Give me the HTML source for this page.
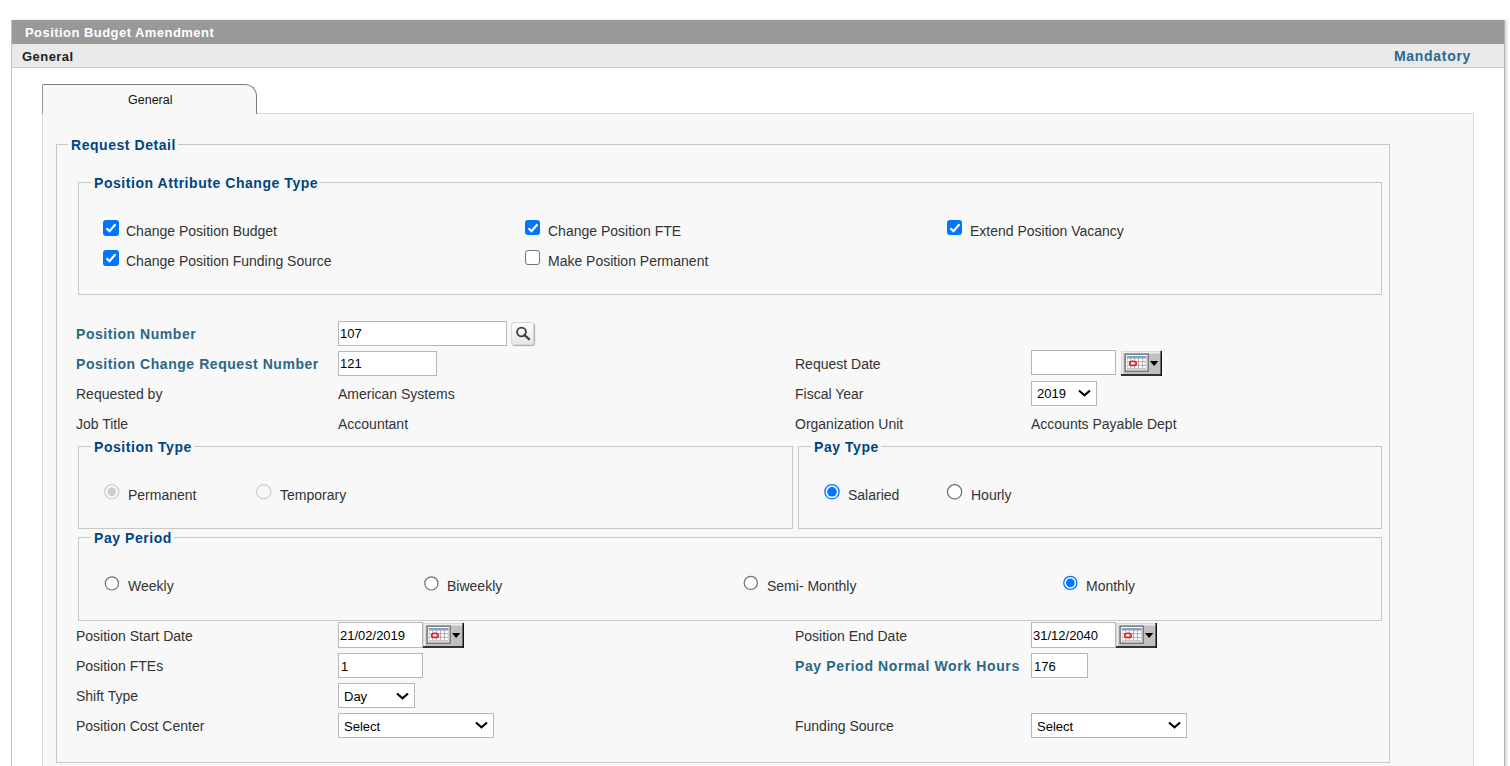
<!DOCTYPE html>
<html><head><meta charset="utf-8">
<style>
*{box-sizing:border-box;margin:0;padding:0}
html,body{width:1510px;height:766px;overflow:hidden;background:#fff;font-family:"Liberation Sans",sans-serif;color:#333}
.a{position:absolute}
.t{position:absolute;white-space:nowrap;font-size:14px;line-height:16px;color:#333}
.b{font-weight:bold;letter-spacing:0.55px}
.lg{color:#004580;font-weight:bold;letter-spacing:0.55px;background:#f8f8f8;padding:0 2px 0 3px}
.mand{color:#2a6886;font-weight:bold;letter-spacing:0.55px}
.fs{position:absolute;border:1px solid #c8c8c8}
.inp{position:absolute;background:#fff;border:1px solid #b4b8b8;height:25px}
.it{position:absolute;white-space:nowrap;font-size:13px;line-height:16px;color:#000}
.cb{position:absolute;width:16px;height:16px;border-radius:3px;background:#0075ff}
.cbu{position:absolute;width:16px;height:16px;border-radius:3px;background:#fff;border:1px solid #767676}
.rd{position:absolute;width:16px;height:16px;border-radius:50%;background:#fff;border:1px solid #767676}
.rdc{position:absolute;width:16px;height:16px;border-radius:50%;background:#fff;border:2px solid #0075ff}
.rdc::after{content:"";position:absolute;left:2px;top:2px;width:8px;height:8px;border-radius:50%;background:#0075ff}
.rdd{position:absolute;width:16px;height:16px;border-radius:50%;background:#f0f0f0;border:1px solid #d0d0d0}
.rdd.on::after{content:"";position:absolute;left:3px;top:3px;width:8px;height:8px;border-radius:50%;background:#cfcfcf}
.sel{position:absolute;background:#fff;border:1px solid #b4b8b8;height:25px}
.chev{position:absolute;width:13px;height:9px}
.cal{position:absolute;width:41px;height:25px}
</style></head><body>
<!-- outer panel -->
<div class="a" style="left:11px;top:20px;width:1494px;height:760px;border-left:1px solid #c4c4c4;border-right:1px solid #b0b0b0;box-shadow:2px 0 2px rgba(0,0,0,0.15)"></div>
<div class="a" style="left:12px;top:20px;width:1492px;height:24px;background:#999"></div>
<div class="t b" style="left:25px;top:25px;font-size:13px;color:#fff;letter-spacing:0.45px">Position Budget Amendment</div>
<div class="a" style="left:12px;top:44px;width:1492px;height:24px;background:#e9e9e9;border-bottom:1px solid #c8c8c8"></div>
<div class="t b" style="left:22px;top:49px;font-size:13px;color:#222;letter-spacing:0.45px">General</div>
<div class="t b" style="left:1394px;top:48px;font-size:14px;color:#2a6a90;letter-spacing:0.7px">Mandatory</div>

<!-- content panel -->
<div class="a" style="left:42px;top:113px;width:1432px;height:700px;background:#f8f8f8;border:1px solid #dcdcdc"></div>
<!-- tab -->
<div class="a" style="left:42px;top:84px;width:215px;height:30px;background:#f8f8f8;border-top:1px solid #7c7c7c;border-left:1px solid #9a9a9a;border-right:1px solid #7c7c7c;border-top-right-radius:12px"></div>
<div class="t" style="left:128px;top:92px;font-size:12.5px;color:#111">General</div>

<!-- Request Detail -->
<div class="fs" style="left:56px;top:144px;width:1334px;height:619px"></div>
<div class="t lg" style="left:68px;top:137px">Request Detail</div>

<!-- PACT -->
<div class="fs" style="left:78px;top:182px;width:1304px;height:113px"></div>
<div class="t lg" style="left:91px;top:175px">Position Attribute Change Type</div>

<div class="cb" style="left:103px;top:220px"><svg width="16" height="16" viewBox="0 0 16 16"><path d="M3.5 8.2 L6.5 11.2 L12.5 4.2" fill="none" stroke="#fff" stroke-width="2.2"/></svg></div>
<div class="t" style="left:126px;top:223px">Change Position Budget</div>
<div class="cb" style="left:103px;top:250px"><svg width="16" height="16" viewBox="0 0 16 16"><path d="M3.5 8.2 L6.5 11.2 L12.5 4.2" fill="none" stroke="#fff" stroke-width="2.2"/></svg></div>
<div class="t" style="left:126px;top:253px">Change Position Funding Source</div>
<div class="cb" style="left:525px;top:220px;width:15px;height:15px"><svg width="16" height="16" viewBox="0 0 16 16"><path d="M3.5 8.2 L6.5 11.2 L12.5 4.2" fill="none" stroke="#fff" stroke-width="2.2"/></svg></div>
<div class="t" style="left:548px;top:223px">Change Position FTE</div>
<div class="cbu" style="left:525px;top:250px;width:15px;height:15px"></div>
<div class="t" style="left:548px;top:253px">Make Position Permanent</div>
<div class="cb" style="left:947px;top:220px;width:15px;height:15px"><svg width="16" height="16" viewBox="0 0 16 16"><path d="M3.5 8.2 L6.5 11.2 L12.5 4.2" fill="none" stroke="#fff" stroke-width="2.2"/></svg></div>
<div class="t" style="left:970px;top:223px">Extend Position Vacancy</div>

<!-- rows -->
<div class="t mand" style="left:76px;top:326px">Position Number</div>
<div class="inp" style="left:338px;top:321px;width:169px"></div>
<div class="it" style="left:340px;top:326px">107</div>
<div class="a" style="left:511px;top:322px;width:23px;height:23px;border-radius:3px;background:linear-gradient(#fff,#e6e6e6);border:1px solid #d8d8d8;box-shadow:1px 1px 1px #a8a8a8"><svg width="22" height="22" viewBox="0 0 22 22" style="position:absolute;left:-1px;top:-1px"><circle cx="10.5" cy="10" r="4.4" fill="none" stroke="#404040" stroke-width="1.9"/><path d="M13.4 13 L18 17.2" stroke="#404040" stroke-width="2.3" stroke-linecap="round"/></svg></div>

<div class="t mand" style="left:76px;top:356px">Position Change Request Number</div>
<div class="inp" style="left:338px;top:351px;width:99px"></div>
<div class="it" style="left:340px;top:356px">121</div>

<div class="t" style="left:795px;top:356px">Request Date</div>
<div class="inp" style="left:1031px;top:350px;width:85px"></div>
<div class="cal" style="left:1121px;top:351px"><svg width="41" height="25" viewBox="0 0 41 25" style="position:absolute;left:0;top:0"><rect x="0" y="0" width="41" height="25" fill="#c0c0c0"/><rect x="0" y="0" width="40" height="2.5" fill="#ececec"/><rect x="0" y="0" width="2.5" height="24" fill="#ececec"/><rect x="0" y="0" width="40" height="1" fill="#d8d8d8"/><rect x="0" y="0" width="1" height="24" fill="#d8d8d8"/><rect x="0" y="23" width="41" height="2" fill="#333"/><rect x="39.5" y="0" width="1.5" height="25" fill="#111"/><rect x="3.5" y="2.5" width="24.3" height="18.3" fill="#6a6a6a"/><rect x="4.8" y="3.8" width="21.7" height="15.7" fill="#fff"/><rect x="5.8" y="5" width="19.7" height="13.5" fill="#a8a8a8"/><rect x="5.8" y="5" width="19.7" height="2" fill="#7da5dc"/><g fill="#fff"><rect x="6.3" y="7.6" width="3" height="2.6"/><rect x="10.2" y="7.6" width="3" height="2.6"/><rect x="14.1" y="7.6" width="3" height="2.6"/><rect x="18" y="7.6" width="3" height="2.6"/><rect x="21.9" y="7.6" width="3" height="2.6"/><rect x="6.3" y="11.2" width="3" height="2.6"/><rect x="10.2" y="11.2" width="3" height="2.6"/><rect x="14.1" y="11.2" width="3" height="2.6"/><rect x="18" y="11.2" width="3" height="2.6"/><rect x="21.9" y="11.2" width="3" height="2.6"/><rect x="6.3" y="14.8" width="3" height="2.6"/><rect x="10.2" y="14.8" width="3" height="2.6"/><rect x="14.1" y="14.8" width="3" height="2.6"/><rect x="18" y="14.8" width="3" height="2.6"/><rect x="21.9" y="14.8" width="3" height="2.6"/></g><ellipse cx="12" cy="12.4" rx="3.4" ry="2.2" fill="none" stroke="#e8141e" stroke-width="1.5"/><path d="M29 10 L37.3 10 L33.15 15 Z" fill="#000"/></svg></div>

<div class="t" style="left:76px;top:386px">Requested by</div>
<div class="t" style="left:338px;top:386px">American Systems</div>
<div class="t" style="left:795px;top:386px">Fiscal Year</div>
<div class="sel" style="left:1031px;top:381px;width:66px"></div>
<div class="it" style="left:1037px;top:386px">2019</div>
<svg class="chev" style="left:1078px;top:389px" viewBox="0 0 13 9"><path d="M1 1.5 L6.5 6.3 L12 1.5" fill="none" stroke="#000" stroke-width="2.1"/></svg>

<div class="t" style="left:76px;top:416px">Job Title</div>
<div class="t" style="left:338px;top:416px">Accountant</div>
<div class="t" style="left:795px;top:416px">Organization Unit</div>
<div class="t" style="left:1031px;top:416px">Accounts Payable Dept</div>

<!-- Position Type -->
<div class="fs" style="left:78px;top:446px;width:715px;height:83px"></div>
<div class="t lg" style="left:91px;top:439px">Position Type</div>
<svg class="a" style="left:103px;top:483px" width="18" height="18"><circle cx="8.80" cy="8.80" r="7.20" fill="#f6f6f6" stroke="#cfcfcf" stroke-width="1.2"/><circle cx="8.80" cy="8.80" r="4.20" fill="#cdcdcd"/></svg>
<div class="t" style="left:128px;top:487px">Permanent</div>
<svg class="a" style="left:255px;top:482px" width="18" height="18"><circle cx="8.80" cy="9.70" r="7.15" fill="#f6f6f6" stroke="#cfcfcf" stroke-width="1.2"/></svg>
<div class="t" style="left:280px;top:487px">Temporary</div>

<!-- Pay Type -->
<div class="fs" style="left:798px;top:446px;width:584px;height:83px"></div>
<div class="t lg" style="left:811px;top:439px">Pay Type</div>
<svg class="a" style="left:823px;top:482px" width="18" height="18"><circle cx="9.00" cy="9.80" r="7.15" fill="#fff" stroke="#0075ff" stroke-width="1.3"/><circle cx="9.00" cy="9.80" r="4.80" fill="#0075ff"/></svg>
<div class="t" style="left:848px;top:487px">Salaried</div>
<svg class="a" style="left:945px;top:483px" width="18" height="18"><circle cx="9.60" cy="8.80" r="7.15" fill="#fff" stroke="#707070" stroke-width="1.2"/></svg>
<div class="t" style="left:971px;top:487px">Hourly</div>

<!-- Pay Period -->
<div class="fs" style="left:78px;top:537px;width:1304px;height:84px"></div>
<div class="t lg" style="left:91px;top:530px">Pay Period</div>
<svg class="a" style="left:103px;top:575px" width="17" height="17"><circle cx="8.90" cy="8.40" r="6.60" fill="#fff" stroke="#707070" stroke-width="1.2"/></svg>
<div class="t" style="left:128px;top:578px">Weekly</div>
<svg class="a" style="left:423px;top:575px" width="17" height="17"><circle cx="8.40" cy="8.40" r="6.60" fill="#fff" stroke="#707070" stroke-width="1.2"/></svg>
<div class="t" style="left:447px;top:578px">Biweekly</div>
<svg class="a" style="left:742px;top:574px" width="17" height="17"><circle cx="8.80" cy="8.90" r="6.60" fill="#fff" stroke="#707070" stroke-width="1.2"/></svg>
<div class="t" style="left:767px;top:578px">Semi- Monthly</div>
<svg class="a" style="left:1062px;top:574px" width="17" height="17"><circle cx="8.30" cy="8.90" r="6.55" fill="#fff" stroke="#0075ff" stroke-width="1.3"/><circle cx="8.30" cy="8.90" r="4.35" fill="#0075ff"/></svg>
<div class="t" style="left:1086px;top:578px">Monthly</div>

<!-- bottom rows -->
<div class="t" style="left:76px;top:628px">Position Start Date</div>
<div class="inp" style="left:338px;top:622px;width:85px;height:26px"></div>
<div class="it" style="left:340px;top:628px">21/02/2019</div>
<div class="cal" style="left:423px;top:623px"><svg width="41" height="25" viewBox="0 0 41 25" style="position:absolute;left:0;top:0"><rect x="0" y="0" width="41" height="25" fill="#c0c0c0"/><rect x="0" y="0" width="40" height="2.5" fill="#ececec"/><rect x="0" y="0" width="2.5" height="24" fill="#ececec"/><rect x="0" y="0" width="40" height="1" fill="#d8d8d8"/><rect x="0" y="0" width="1" height="24" fill="#d8d8d8"/><rect x="0" y="23" width="41" height="2" fill="#333"/><rect x="39.5" y="0" width="1.5" height="25" fill="#111"/><rect x="3.5" y="2.5" width="24.3" height="18.3" fill="#6a6a6a"/><rect x="4.8" y="3.8" width="21.7" height="15.7" fill="#fff"/><rect x="5.8" y="5" width="19.7" height="13.5" fill="#a8a8a8"/><rect x="5.8" y="5" width="19.7" height="2" fill="#7da5dc"/><g fill="#fff"><rect x="6.3" y="7.6" width="3" height="2.6"/><rect x="10.2" y="7.6" width="3" height="2.6"/><rect x="14.1" y="7.6" width="3" height="2.6"/><rect x="18" y="7.6" width="3" height="2.6"/><rect x="21.9" y="7.6" width="3" height="2.6"/><rect x="6.3" y="11.2" width="3" height="2.6"/><rect x="10.2" y="11.2" width="3" height="2.6"/><rect x="14.1" y="11.2" width="3" height="2.6"/><rect x="18" y="11.2" width="3" height="2.6"/><rect x="21.9" y="11.2" width="3" height="2.6"/><rect x="6.3" y="14.8" width="3" height="2.6"/><rect x="10.2" y="14.8" width="3" height="2.6"/><rect x="14.1" y="14.8" width="3" height="2.6"/><rect x="18" y="14.8" width="3" height="2.6"/><rect x="21.9" y="14.8" width="3" height="2.6"/></g><ellipse cx="12" cy="12.4" rx="3.4" ry="2.2" fill="none" stroke="#e8141e" stroke-width="1.5"/><path d="M29 10 L37.3 10 L33.15 15 Z" fill="#000"/></svg></div>
<div class="t" style="left:795px;top:628px">Position End Date</div>
<div class="inp" style="left:1031px;top:622px;width:85px;height:26px"></div>
<div class="it" style="left:1033px;top:628px">31/12/2040</div>
<div class="cal" style="left:1116px;top:623px"><svg width="41" height="25" viewBox="0 0 41 25" style="position:absolute;left:0;top:0"><rect x="0" y="0" width="41" height="25" fill="#c0c0c0"/><rect x="0" y="0" width="40" height="2.5" fill="#ececec"/><rect x="0" y="0" width="2.5" height="24" fill="#ececec"/><rect x="0" y="0" width="40" height="1" fill="#d8d8d8"/><rect x="0" y="0" width="1" height="24" fill="#d8d8d8"/><rect x="0" y="23" width="41" height="2" fill="#333"/><rect x="39.5" y="0" width="1.5" height="25" fill="#111"/><rect x="3.5" y="2.5" width="24.3" height="18.3" fill="#6a6a6a"/><rect x="4.8" y="3.8" width="21.7" height="15.7" fill="#fff"/><rect x="5.8" y="5" width="19.7" height="13.5" fill="#a8a8a8"/><rect x="5.8" y="5" width="19.7" height="2" fill="#7da5dc"/><g fill="#fff"><rect x="6.3" y="7.6" width="3" height="2.6"/><rect x="10.2" y="7.6" width="3" height="2.6"/><rect x="14.1" y="7.6" width="3" height="2.6"/><rect x="18" y="7.6" width="3" height="2.6"/><rect x="21.9" y="7.6" width="3" height="2.6"/><rect x="6.3" y="11.2" width="3" height="2.6"/><rect x="10.2" y="11.2" width="3" height="2.6"/><rect x="14.1" y="11.2" width="3" height="2.6"/><rect x="18" y="11.2" width="3" height="2.6"/><rect x="21.9" y="11.2" width="3" height="2.6"/><rect x="6.3" y="14.8" width="3" height="2.6"/><rect x="10.2" y="14.8" width="3" height="2.6"/><rect x="14.1" y="14.8" width="3" height="2.6"/><rect x="18" y="14.8" width="3" height="2.6"/><rect x="21.9" y="14.8" width="3" height="2.6"/></g><ellipse cx="12" cy="12.4" rx="3.4" ry="2.2" fill="none" stroke="#e8141e" stroke-width="1.5"/><path d="M29 10 L37.3 10 L33.15 15 Z" fill="#000"/></svg></div>

<div class="t" style="left:76px;top:658px">Position FTEs</div>
<div class="inp" style="left:338px;top:653px;width:85px"></div>
<div class="it" style="left:341px;top:659px">1</div>
<div class="t mand" style="left:795px;top:658px;letter-spacing:0.62px">Pay Period Normal Work Hours</div>
<div class="inp" style="left:1031px;top:653px;width:57px"></div>
<div class="it" style="left:1034px;top:659px">176</div>

<div class="t" style="left:76px;top:688px">Shift Type</div>
<div class="sel" style="left:338px;top:683px;width:77px"></div>
<div class="it" style="left:344px;top:689px">Day</div>
<svg class="chev" style="left:396px;top:692px" viewBox="0 0 13 9"><path d="M1 1.5 L6.5 6.3 L12 1.5" fill="none" stroke="#000" stroke-width="2.1"/></svg>

<div class="t" style="left:76px;top:718px">Position Cost Center</div>
<div class="sel" style="left:338px;top:713px;width:156px"></div>
<div class="it" style="left:344px;top:719px">Select</div>
<svg class="chev" style="left:475px;top:721px" viewBox="0 0 13 9"><path d="M1 1.5 L6.5 6.3 L12 1.5" fill="none" stroke="#000" stroke-width="2.1"/></svg>
<div class="t" style="left:795px;top:718px">Funding Source</div>
<div class="sel" style="left:1031px;top:713px;width:156px"></div>
<div class="it" style="left:1037px;top:719px">Select</div>
<svg class="chev" style="left:1168px;top:721px" viewBox="0 0 13 9"><path d="M1 1.5 L6.5 6.3 L12 1.5" fill="none" stroke="#000" stroke-width="2.1"/></svg>
</body></html>
